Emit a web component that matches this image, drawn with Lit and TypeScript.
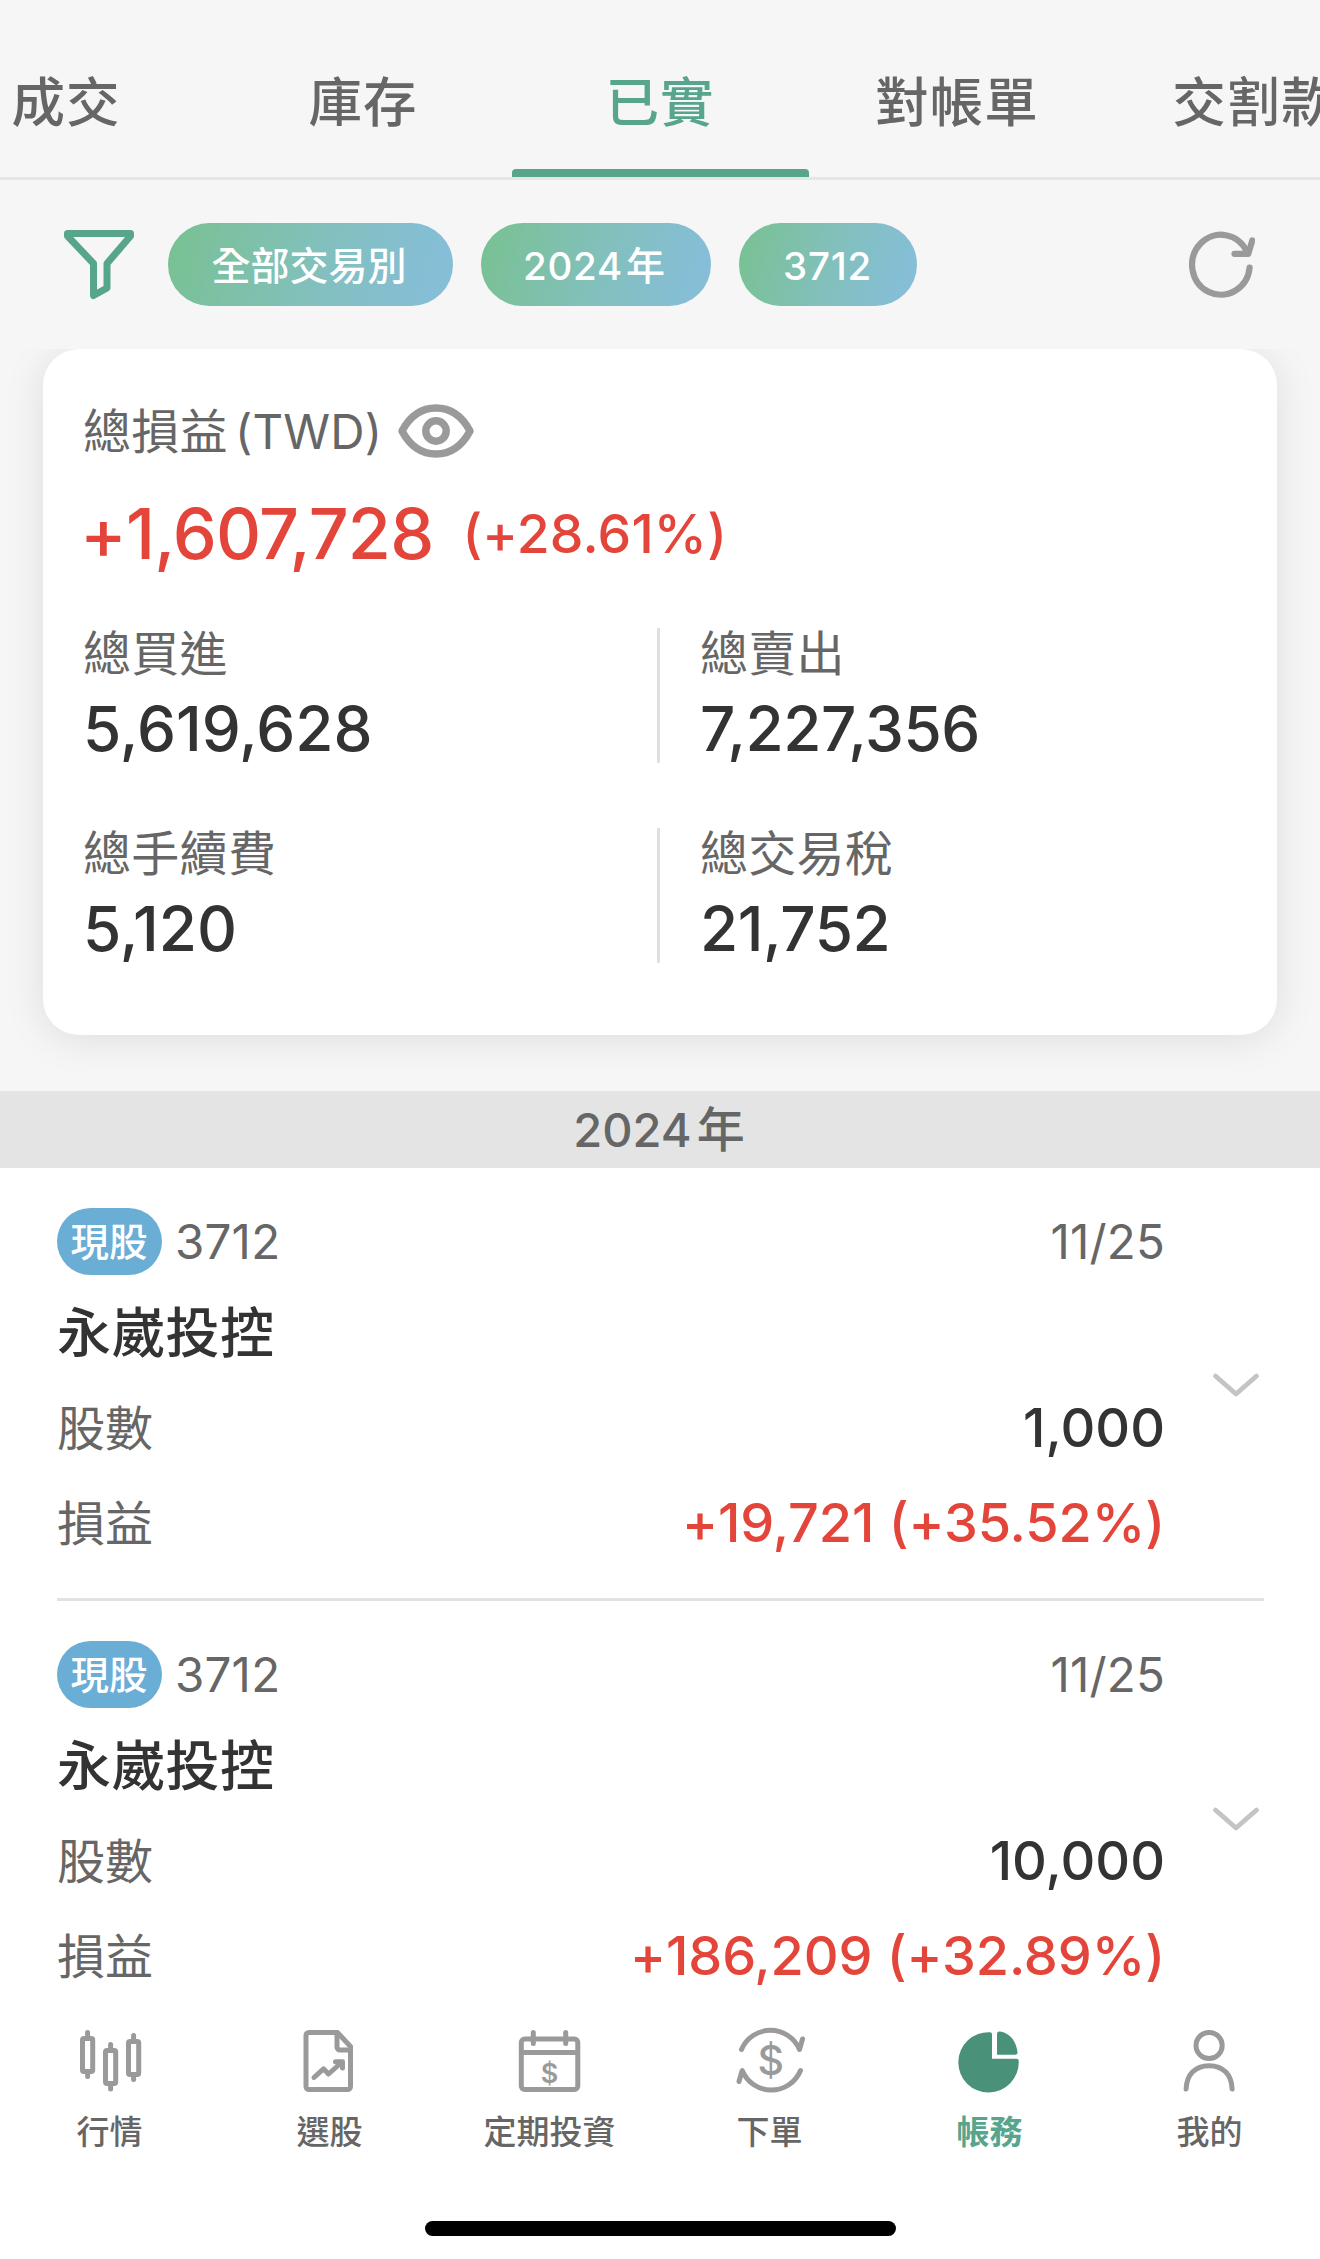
import { LitElement, html, css, svg, nothing } from "lit";
import { customElement, property } from "lit/decorators.js";
import { classMap } from "lit/directives/class-map.js";

const FONT = css`"Inter", "Noto Sans CJK TC", sans-serif`;

interface Trade {
  code: string;
  name: string;
  date: string;
  shares: string;
  profit: string;
}

const TABS = ["成交", "庫存", "已實", "對帳單", "交割款"];

const TRADES: Trade[] = [
  { code: "3712", name: "永崴投控", date: "11/25", shares: "1,000", profit: "+19,721 (+35.52%)" },
  { code: "3712", name: "永崴投控", date: "11/25", shares: "10,000", profit: "+186,209 (+32.89%)" },
];

const STATS = [
  { label: "總買進", value: "5,619,628" },
  { label: "總賣出", value: "7,227,356" },
  { label: "總手續費", value: "5,120" },
  { label: "總交易稅", value: "21,752" },
];

/* Bottom bar icons, each drawn in a 70 x 70 box. */
const NAV = [
  {
    label: "行情",
    icon: svg`
      <rect x="7.500" y="13.500" width="10.200" height="33" rx="1.500" /><path d="M12.600 7.500v6M12.600 47v4.500" />
      <rect x="30.500" y="25.500" width="10.200" height="33" rx="1.500" /><path d="M35.600 19.500v6M35.600 59v5" />
      <rect x="53.500" y="16.500" width="10.200" height="33" rx="1.500" /><path d="M58.600 10.500v6M58.600 50v4.500" />`,
  },
  {
    label: "選股",
    icon: svg`
      <path d="M42.500 7.500H14a3 3 0 0 0-3 3V61.500a3 3 0 0 0 3 3H52.500a3 3 0 0 0 3-3V21.500z" />
      <path d="M42 8V22a3 3 0 0 0 3 3H54.500" />
      <path d="M19 52.500L28.500 43.800L33.500 49L46.500 37.500M40.500 36.800H47.500V43" />`,
  },
  {
    label: "定期投資",
    icon: svg`
      <rect x="6.300" y="14" width="56.500" height="50.500" rx="3.500" />
      <path d="M6.500 27.500H62.500M18.300 7.500V18.500M50.700 7.500V18.500" />
      <text class="dollar bold" x="34.500" y="57.500" font-size="27">$</text>`,
  },
  {
    label: "下單",
    icon: svg`
      <path d="M6.500 24.500A31.500 31.500 0 0 1 64.500 24.500L67.500 14" />
      <path d="M65.500 45.500A31.500 31.500 0 0 1 7.200 45.500L4 56.500" />
      <text class="dollar" x="35.700" y="50" font-size="41">$</text>`,
  },
  {
    label: "帳務",
    active: true,
    icon: svg`
      <path class="solid" d="M35 7.200q2 0 2 2V33.800H61.500q2.300 0 2.200 2.200A30.200 30.200 0 1 1 35 7.200z" />
      <path class="solid" d="M42 9q0-2.500 2.500-2.400C54 7.500 61.500 15.500 62.500 27.500q.2 2.300-2.200 2.300H42z" />`,
  },
  {
    label: "我的",
    icon: svg`
      <circle cx="34.100" cy="20.500" r="13.100" />
      <path d="M11.100 64C11.600 50 19.800 40.700 34.100 40.700S56.700 50 57.100 64" />`,
  },
];

@customElement("tab-strip")
class TabStrip extends LitElement {
  static styles = css`
    :host { display: block; }
    .strip {
      display: flex; justify-content: center; overflow: hidden;
      height: 177px; border-bottom: 3px solid #e6e6e6;
    }
    .tab {
      box-sizing: border-box; flex: 0 0 297px; height: 177px; padding-top: 70px;
      font-family: ${FONT}; font-size: 53.500px; line-height: 66px; font-weight: 500;
      letter-spacing: 1px; color: #666; text-align: center; white-space: nowrap;
      display: flex; flex-direction: column; justify-content: space-between;
    }
    .active { color: #56a58c; }
    .active::after { content: ""; height: 8px; border-radius: 4px 4px 0 0; background: #56a58c; }
  `;
  render() {
    return html`<div class="strip">
      ${TABS.map((t, i) => html`<div class=${classMap({ tab: true, active: i === 2 })}>${t}</div>`)}
    </div>`;
  }
}

@customElement("filter-bar")
class FilterBar extends LitElement {
  static styles = css`
    :host { display: block; }
    .bar { box-sizing: border-box; height: 169px; padding: 0 65px 0 63px; display: flex; align-items: center; }
    .funnel { width: 72px; height: 72px; margin-right: 33px; }
    .chips { display: flex; gap: 28px; flex: 1; }
    .chip {
      box-sizing: border-box; height: 83px; padding: 1px 0 0; border-radius: 42px;
      background: linear-gradient(105deg, #79c195 5%, #82c0bb 50%, #85bed6 90%);
      font-family: ${FONT}; font-size: 39px; line-height: 83px; font-weight: 500;
      color: #fff; white-space: nowrap; text-align: center;
    }
    .all { width: 285px; padding-right: 3px; }
    .year { width: 230px; padding-right: 4px; }
    .code { width: 178px; padding-right: 1px; }
    .num { font-size: 38.500px; letter-spacing: 0.800px; }
    .year .num { margin-right: 3px; }
    .refresh { width: 68px; height: 72px; }
  `;
  render() {
    return html`<div class="bar">
      <svg class="funnel" viewBox="0 0 72 72" fill="none" stroke="#56a58c" stroke-width="7" stroke-linejoin="round">
        <path d="M4.500 4.500H67.500V7L44 34.500V59L30.500 66.500V34.500L4.500 7z" />
      </svg>
      <div class="chips">
        <div class="chip all">全部交易別</div>
        <div class="chip year"><span class="num">2024</span>年</div>
        <div class="chip code"><span class="num">3712</span></div>
      </div>
      <svg class="refresh" viewBox="0 0 68 72" fill="none" stroke="#9a9a9a" stroke-width="6.200" stroke-linecap="round" stroke-linejoin="round">
        <path d="M62.600 38.500A28.800 30 0 1 1 60 23" />
        <path d="M47.500 24.800H61.300L65.300 11.500" />
      </svg>
    </div>`;
  }
}

@customElement("summary-card")
class SummaryCard extends LitElement {
  static styles = css`
    :host { display: block; font-family: ${FONT}; }
    .clip { overflow: hidden; padding: 0 43px 56px; }
    .card {
      box-sizing: border-box; height: 686px; padding: 52px 0 0 40px; border-radius: 36px;
      background: #fff; box-shadow: 0 4px 40px rgba(0, 0, 0, 0.1);
    }
    .title { display: flex; align-items: center; height: 60px; }
    .label { padding-top: 1px; font-size: 48px; line-height: 50px; letter-spacing: 0.300px; color: #666; white-space: nowrap; }
    .unit { font-size: 47.500px; letter-spacing: 0.200px; margin-left: 7px; }
    .eye { width: 80px; height: 58px; margin-left: 14px; }
    .total { display: flex; align-items: center; margin: 31px 0 0 -3px; height: 84px; color: #e4453a; font-weight: 500; white-space: nowrap; }
    .amount { font-size: 70px; line-height: 84px; letter-spacing: -0.800px; }
    .rate { font-size: 53.500px; line-height: 84px; letter-spacing: 0.200px; margin-left: 29px; }
    .stats { display: grid; grid-template-columns: 577px 1fr; row-gap: 65px; margin-top: 52px; }
    .stat { box-sizing: border-box; height: 135px; }
    .stat:nth-child(odd) { border-right: 3px solid #e0e0e0; }
    .stat:nth-child(even) { padding-left: 40px; }
    .value { margin-top: 17px; font-size: 62px; line-height: 66px; font-weight: 500; color: #333; }
    .stat:nth-child(even) .value { letter-spacing: -0.450px; }
  `;
  render() {
    return html`<div class="clip"><div class="card">
      <div class="title">
        <div class="label">總損益<span class="unit">(TWD)</span></div>
        <svg class="eye" viewBox="0 0 80 58" fill="none" stroke="#9a9a9a" stroke-width="7.500">
          <path d="M6 29C14 14 26 6 40 6S66 14 74 29C66 44 54 52 40 52S14 44 6 29z" stroke-linejoin="round" />
          <circle cx="40" cy="29" r="10.200" />
        </svg>
      </div>
      <div class="total"><span class="amount">+1,607,728</span><span class="rate">(+28.61%)</span></div>
      <div class="stats">
        ${STATS.map((s) => html`<div class="stat"><div class="label">${s.label}</div><div class="value">${s.value}</div></div>`)}
      </div>
    </div></div>`;
  }
}

@customElement("trade-row")
class TradeRow extends LitElement {
  @property({ attribute: false }) trade!: Trade;
  static styles = css`
    :host { display: block; font-family: ${FONT}; }
    .row {
      box-sizing: border-box; height: 433.400px; margin: 0 56px 0 57px; border-bottom: 3px solid #e2e2e2;
      display: flex; align-items: center; justify-content: space-between; padding-right: 3px;
    }
    .body { width: 1108px; height: 433px; box-sizing: border-box; padding-top: 41px; }
    .line { display: flex; align-items: center; white-space: nowrap; }
    .push { margin-left: auto; }
    .head { height: 67px; }
    .badge {
      width: 105px; height: 67px; border-radius: 34px; background: #6aaed6; color: #fff;
      font-size: 38.500px; line-height: 68px; font-weight: 500; text-align: center; text-indent: -1px;
    }
    .code { margin-left: 13px; }
    .light { font-size: 47.500px; color: #666; letter-spacing: 0.200px; }
    .name { margin-top: 26px; font-size: 54px; line-height: 66px; font-weight: 500; letter-spacing: 0.300px; color: #333; }
    .label { padding-top: 2px; font-size: 48px; line-height: 56px; color: #666; }
    .shares { margin-top: 31px; height: 60px; }
    .profit { margin-top: 35px; height: 60px; }
    .number { font-size: 54px; line-height: 60px; font-weight: 500; color: #333; }
    .up { color: #e4453a; }
    .profit .number { letter-spacing: -0.100px; }
    .chevron { width: 50px; height: 30px; margin-top: 4px; }
  `;
  render() {
    const t = this.trade;
    if (!t) return nothing;
    return html`<div class="row">
      <div class="body">
        <div class="line head">
          <span class="badge">現股</span><span class="light code">${t.code}</span><span class="light push">${t.date}</span>
        </div>
        <div class="line name">${t.name}</div>
        <div class="line shares"><span class="label">股數</span><span class="number push">${t.shares}</span></div>
        <div class="line profit"><span class="label">損益</span><span class="number up push">${t.profit}</span></div>
      </div>
      <svg class="chevron" viewBox="0 0 50 30" fill="none" stroke="#c4c4c4" stroke-width="4.800" stroke-linecap="round" stroke-linejoin="round">
        <path d="M4.500 6L25 24L45.500 6" />
      </svg>
    </div>`;
  }
}

@customElement("bottom-nav")
class BottomNav extends LitElement {
  static styles = css`
    :host { display: block; background: #fff; font-family: ${FONT}; }
    .bar { display: grid; grid-template-columns: repeat(6, 1fr); height: 196px; padding-top: 25px; }
    .item { display: flex; flex-direction: column; align-items: center; color: #666; }
    .icon {
      width: 70px; height: 70px; fill: none; stroke: #9a9a9a; stroke-width: 5;
      stroke-linecap: round; stroke-linejoin: round;
    }
    .solid { fill: #4a9179; stroke: none; }
    .dollar { fill: #9a9a9a; stroke: none; text-anchor: middle; font-family: ${FONT}; font-weight: 500; }
    .bold { font-weight: 600; }
    .text { margin-top: 17px; padding-right: 1px; font-size: 33px; line-height: 40px; font-weight: 500; white-space: nowrap; }
    .active { color: #56a58c; }
    .active .text { font-weight: 700; }
    .home { width: 471px; height: 15px; border-radius: 8px; background: #000; margin: 0 auto; }
  `;
  render() {
    return html`<div class="bar">
        ${NAV.map((n) => html`<div class=${classMap({ item: true, active: !!n.active })}>
          <svg class="icon" viewBox="0 0 70 70">${n.icon}</svg>
          <span class="text">${n.label}</span>
        </div>`)}
      </div>
      <div class="home"></div>`;
  }
}

@customElement("app-root")
class AppRoot extends LitElement {
  static styles = css`
    :host { display: block; }
    .page { width: 1320px; height: 2259px; overflow: hidden; background: #fff; display: flex; flex-direction: column; }
    .top { background: #f6f6f6; flex: none; }
    .year {
      box-sizing: border-box; flex: none; height: 77px; padding-right: 2px; background: #e4e4e4; color: #666; text-align: center;
      font-family: ${FONT}; font-size: 48px; line-height: 77px; font-weight: 500;
    }
    .digits { font-size: 47px; margin-right: 5px; }
    .list { height: 832px; flex: none; overflow: hidden; }
  `;
  render() {
    return html`<div class="page">
      <div class="top">
        <tab-strip></tab-strip>
        <filter-bar></filter-bar>
        <summary-card></summary-card>
      </div>
      <div class="year"><span class="digits">2024</span>年</div>
      <div class="list">${TRADES.map((t) => html`<trade-row .trade=${t}></trade-row>`)}</div>
      <bottom-nav></bottom-nav>
    </div>`;
  }
}
